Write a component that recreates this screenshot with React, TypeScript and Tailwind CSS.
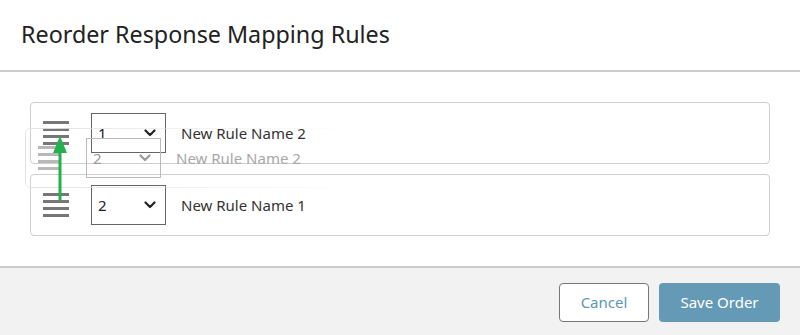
import React from "react";

const font = { fontFamily: '"Noto Sans", "Open Sans", "Liberation Sans", sans-serif' };

function Handle({ light }: { light?: boolean }) {
  const c = light ? "bg-[#b8b8b8]" : "bg-[#777]";
  const w = light ? "w-[21px]" : "w-[26px]";
  return (
    <div className={`flex flex-col gap-[4px] ${w}`}>
      <div className={`h-[3px] w-full ${c}`} />
      <div className={`h-[3px] w-full ${c}`} />
      <div className={`h-[3px] w-full ${c}`} />
      <div className={`h-[3px] w-full ${c}`} />
    </div>
  );
}

function Chevron({ color }: { color: string }) {
  return (
    <svg width="12" height="8" viewBox="0 0 12 8">
      <path d="M1.5 1.5 L6 6 L10.5 1.5" fill="none" stroke={color} strokeWidth="2.2" strokeLinecap="round" strokeLinejoin="round" />
    </svg>
  );
}

function Select({ value, light }: { value: string; light?: boolean }) {
  return (
    <div
      className={`flex h-[40px] w-[75px] items-center justify-between border pl-[6px] pr-[9px] text-[15px] ${
        light ? "border-[#bbb]" : "border-[#666]"
      }`}
    >
      <span className={light ? "text-[#999]" : "text-[#222]"}>{value}</span>
      <Chevron color={light ? "#999" : "#222"} />
    </div>
  );
}

function Row({ num, name }: { num: string; name: string }) {
  return (
    <div className="flex h-[62px] items-center rounded-[4px] border border-[#cfcfcf] pl-[12px]">
      <Handle />
      <div className="ml-[22px]">
        <Select value={num} />
      </div>
      <span className="ml-[15px] text-[15px] text-[#333]">{name}</span>
    </div>
  );
}

export default function App() {
  return (
    <div className="h-[335px] w-[800px] bg-white" style={font}>
      <div className="flex h-[72px] items-center border-b-2 border-[#cccccc] pb-[2px] pl-[21px]">
        <h1 className="text-[23.3px] font-normal text-[#222]">Reorder Response Mapping Rules</h1>
      </div>
      <div className="relative flex h-[196px] flex-col gap-[10px] border-b-2 border-[#cccccc] px-[30px] pt-[30px]">
        <Row num="1" name="New Rule Name 2" />
        <Row num="2" name="New Rule Name 1" />
        {/* drag ghost */}
        <div className="pointer-events-none absolute left-[25px] top-[56px] flex h-[60px] w-[740px] items-center pl-[13px]">
          <div className="absolute inset-0 rounded-[5px] border border-[#e2e2e2] [mask-image:linear-gradient(to_right,black_0%,rgba(0,0,0,0.5)_20%,transparent_45%)]" />
          <Handle light />
          <div className="ml-[27px]">
            <Select value="2" light />
          </div>
          <span className="ml-[15px] text-[15px] text-[#a8a8a8]">New Rule Name 2</span>
        </div>
        {/* arrow */}
        <svg className="pointer-events-none absolute left-[50px] top-[62px]" width="20" height="70" viewBox="0 0 20 70">
          <line x1="10" y1="14" x2="10" y2="66" stroke="#22b14c" strokeWidth="3" />
          <polygon points="10,2 3,19 17,19" fill="#22b14c" />
        </svg>
      </div>
      <div className="flex h-[67px] items-start justify-end gap-[10px] bg-[#f2f2f2] pr-[20px] pt-[15px]">
        <button className="h-[39px] w-[90px] rounded-[4px] border border-[#777] bg-white text-[15px] text-[#5b97b5]">
          Cancel
        </button>
        <button className="h-[39px] w-[121px] rounded-[4px] bg-[#649ab5] text-[15px] text-white">Save Order</button>
      </div>
    </div>
  );
}
